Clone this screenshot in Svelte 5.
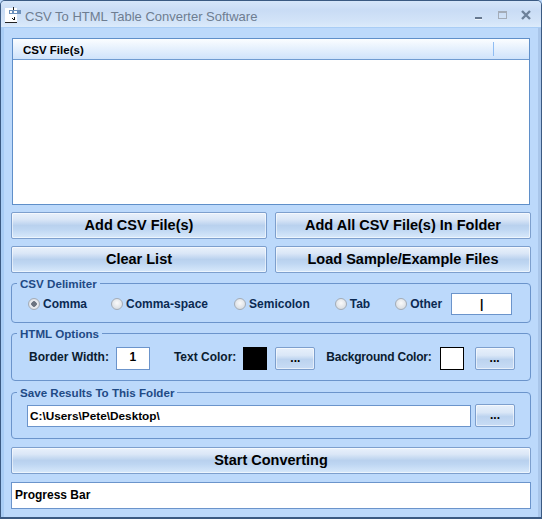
<script>
  const delimiters = ['Comma', 'Comma-space', 'Semicolon', 'Tab', 'Other'];
  let delimiter = 'Comma';
</script>

<div class="window">
  <header class="titlebar">
    <svg class="appicon" width="16" height="17" viewBox="0 0 16 17">
      <rect x="0" y="1" width="12" height="15" fill="#fff" />
      <path d="M8.5 0v3M0 15.5h12" fill="none" stroke="#222" />
      <rect x="4" y="3" width="12" height="4" fill="#6f93bd" />
      <path d="M5 4h2v2H5zM9 4h3v2H9z" fill="#fff" />
      <path d="M7 11h1v1H7zM9 10h1v3H9zM8 12h1v1H8z" fill="#111" />
    </svg>
    <span class="title">CSV To HTML Table Converter Software</span>
    <div class="controls">
      <span class="min"></span>
      <span class="max"></span>
      <svg width="10" height="10" viewBox="0 0 10 10">
        <path d="M1 1l8 8M9 1l-8 8" stroke="#6d8199" stroke-width="2.4" />
      </svg>
    </div>
  </header>

  <main class="client">
    <section class="list">
      <div class="list-head">
        <span class="col">CSV File(s)</span>
        <span class="col-end"></span>
      </div>
    </section>

    <div class="button-grid">
      <button class="btn">Add CSV File(s)</button>
      <button class="btn">Add All CSV File(s) In Folder</button>
      <button class="btn">Clear List</button>
      <button class="btn">Load Sample/Example Files</button>
    </div>

    <fieldset class="delim">
      <legend>CSV Delimiter</legend>
      <div class="row">
        {#each delimiters as d}
          <label class="radio" class:on={delimiter === d} on:click={() => (delimiter = d)}>
            <span class="dot"></span>{d}
          </label>
        {/each}
        <input class="field other" value="|" />
      </div>
    </fieldset>

    <fieldset class="options">
      <legend>HTML Options</legend>
      <div class="row">
        <span class="lbl">Border Width:</span>
        <input class="field width" value="1" />
        <span class="lbl text-lbl">Text Color:</span>
        <span class="swatch black"></span>
        <button class="btn small">...</button>
        <span class="lbl bg-lbl">Background Color:</span>
        <span class="swatch"></span>
        <button class="btn small">...</button>
      </div>
    </fieldset>

    <fieldset class="save">
      <legend>Save Results To This Folder</legend>
      <div class="row">
        <input class="field path" value="C:\Users\Pete\Desktop\" />
        <button class="btn small">...</button>
      </div>
    </fieldset>

    <button class="btn start">Start Converting</button>
    <div class="progress">Progress Bar</div>
  </main>
</div>

<style>
  :global(body) {
    margin: 0;
    background: #bcd9fb;
  }

  .window {
    width: 542px;
    height: 519px;
    box-sizing: border-box;
    display: flex;
    flex-direction: column;
    border: 1px solid #3b5a82;
    border-bottom-width: 2px;
    border-radius: 5px 5px 0 0;
    background: #bcd9fb;
    font-family: 'Liberation Sans', Arial, sans-serif;
    font-size: 12px;
    font-weight: bold;
    color: #000;
    overflow: hidden;
  }

  .titlebar {
    height: 26px;
    flex: none;
    display: flex;
    align-items: center;
    padding: 0 10px 0 4px;
    background: linear-gradient(#d6e6f9 0, #c9dcf5 35%, #d3e4f8 80%, #dcebfb 100%);
    border-bottom: 1px solid #a9cdf5;
  }

  .appicon {
    flex: none;
    margin: 3px 4px 0 0;
  }

  .title {
    font-weight: normal;
    font-size: 13px;
    color: #6e7d91;
    padding-top: 5px;
  }

  .controls {
    margin-left: auto;
    display: flex;
    align-items: center;
    padding-top: 2px;
  }

  .min {
    width: 7px;
    height: 2px;
    margin-top: 6px;
    background: #66788f;
    border-bottom: 1px solid #eef5fd;
  }

  .max {
    width: 7px;
    height: 5px;
    margin: 0 14px 0 16px;
    border: 1px solid #a3acb8;
    border-top-width: 2px;
  }

  .client {
    flex: 1;
    display: flex;
    flex-direction: column;
    padding: 10px 7px 0;
    border-left: 3px solid #a9cdf5;
    border-right: 3px solid #a9c6ea;
    background: #bcd9fb;
    box-sizing: border-box;
  }

  .list {
    height: 167px;
    margin: 0 1px;
    box-sizing: border-box;
    flex: none;
    background: #fff;
    border: 1px solid #5f8fc9;
  }

  .list-head {
    height: 20px;
    display: flex;
    align-items: center;
    justify-content: space-between;
    background: linear-gradient(#fbfdff, #cfe3fb);
    border-bottom: 1px solid #6f9bd1;
  }

  .col {
    padding: 1px 0 0 10px;
    font-size: 11.5px;
  }

  .col-end {
    width: 35px;
    height: 14px;
    border-left: 1px solid #8fbdf3;
  }

  .button-grid {
    margin-top: 7px;
    display: grid;
    grid-template-columns: 256px 256px;
    grid-auto-rows: 27px;
    column-gap: 8px;
    row-gap: 7px;
  }

  .btn {
    margin: 0;
    padding: 0 0 2px;
    box-sizing: border-box;
    font: inherit;
    font-size: 14.5px;
    color: #000;
    border: 1px solid #7d9fcd;
    border-radius: 2px;
    background: linear-gradient(#e9f1fb 0, #dbe7f7 25%, #b9d1ee 50%, #bed6f2 65%, #d8e9fb 100%);
    box-shadow: inset 0 0 0 1px rgba(255, 255, 255, 0.55);
  }

  .btn.small {
    width: 40px;
    height: 23px;
    flex: none;
    font-size: 12px;
    line-height: 20px;
    background: linear-gradient(#e7f0fb 0, #dae7f7 35%, #bcd3ef 55%, #c8dcf5 100%);
  }

  fieldset {
    margin: 3px 0 0;
    padding: 0;
    min-width: 0;
    box-sizing: border-box;
    border: 1px solid #6b94cb;
    border-radius: 4px;
    flex: none;
  }

  legend {
    margin-left: 5px;
    padding: 0 3px;
    color: #1f4a85;
    font-size: 11.6px;
    line-height: 15px;
  }

  .row {
    display: flex;
    align-items: center;
    white-space: nowrap;
  }

  .delim {
    height: 47px;
  }

  .delim .row {
    height: 26px;
    padding-left: 16px;
    gap: 25px;
  }

  .radio {
    display: flex;
    align-items: center;
    color: #0b2a52;
    font-size: 12px;
    gap: 3px;
    cursor: default;
  }

  .radio:nth-child(2) {
    margin-left: -1px;
  }

  .radio:nth-child(3) {
    margin-left: 1px;
  }

  .dot {
    width: 12px;
    height: 12px;
    box-sizing: border-box;
    border: 1px solid #a4acb6;
    border-radius: 50%;
    background: radial-gradient(circle at 50% 40%, #fafafa, #cfd5dc);
  }

  .on .dot {
    background: radial-gradient(circle, #6c7480 0 2.5px, #eceef1 3px, #cfd5dc);
  }

  .field {
    box-sizing: border-box;
    margin: 0;
    padding: 0 2px;
    height: 22px;
    font: inherit;
    color: #000;
    background: #fff;
    border: 1px solid #6b94cb;
    outline: none;
    border-radius: 0;
  }

  .other {
    width: 61px;
    margin-left: -16px;
    text-align: center;
  }

  .options {
    height: 55px;
  }

  .options .row {
    height: 34px;
    padding-left: 17px;
  }

  .lbl {
    color: #0b1c30;
    flex: none;
    margin-bottom: 2px;
  }

  .width {
    width: 34px;
    height: 23px;
    margin-left: 7px;
    padding-bottom: 2px;
    text-align: center;
  }

  .text-lbl {
    margin-left: 24px;
  }

  .swatch {
    width: 24px;
    height: 23px;
    flex: none;
    box-sizing: border-box;
    margin-left: 7px;
    background: #fff;
    border: 1px solid #000;
  }

  .swatch.black {
    background: #000;
  }

  .options .btn.small {
    margin-left: 8px;
  }

  .options .swatch + .btn.small:last-child {
    margin-left: 11px;
  }

  .options .bg-lbl {
    margin-left: 11px;
    letter-spacing: -0.2px;
  }

  .options .bg-lbl + .swatch {
    margin-left: 8px;
  }

  .save {
    height: 54px;
    margin-top: 4px;
  }

  .save .row {
    height: 31px;
    padding-left: 15px;
    gap: 4px;
  }

  .path {
    width: 444px;
    font-size: 11.8px;
  }

  .start {
    height: 27px;
    margin: 8px 0 0;
    flex: none;
  }

  .progress {
    height: 27px;
    flex: none;
    box-sizing: border-box;
    margin-top: 8px;
    padding-left: 3px;
    line-height: 25px;
    background: #fff;
    border: 1px solid #6b94cb;
    font-size: 12px;
  }
</style>
